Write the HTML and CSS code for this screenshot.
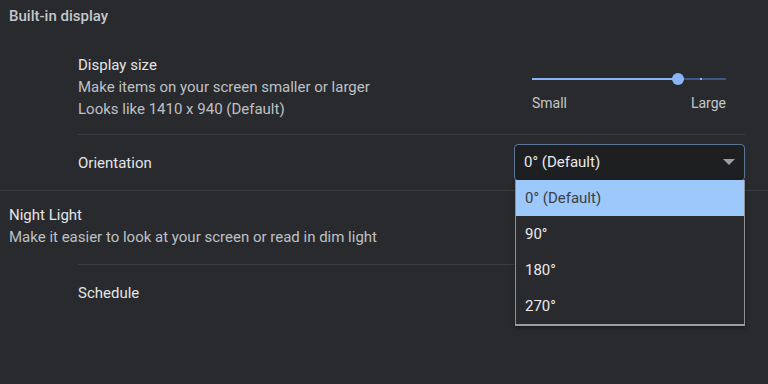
FILE: index.html
```html
<!DOCTYPE html>
<html>
<head>
<meta charset="utf-8">
<link rel="stylesheet" href="styles.css">
</head>
<body>
<div class="page">
  <section class="section">
    <div class="section-header">Built-in display</div>
    <div class="row row-size">
      <div class="texts">
        <div class="primary">Display size</div>
        <div class="secondary">Make items on your screen smaller or larger</div>
        <div class="secondary">Looks like 1410 x 940 (Default)</div>
      </div>
      <div class="slider">
        <div class="track">
          <div class="track-active"></div>
          <div class="track-inactive"></div>
          <div class="tick"></div>
          <div class="knob"></div>
        </div>
        <div class="slider-labels"><span>Small</span><span>Large</span></div>
      </div>
    </div>
    <div class="row row-orient">
      <div class="primary">Orientation</div>
      <div class="select">
        <span>0° (Default)</span>
        <svg class="arrow" width="12" height="6" viewBox="0 0 12 6"><path d="M0 0 L12 0 L6 6 Z" fill="#9aa0a6"/></svg>
      </div>
    </div>
  </section>
  <section class="section night">
    <div class="night-texts">
      <div class="primary">Night Light</div>
      <div class="secondary">Make it easier to look at your screen or read in dim light</div>
    </div>
    <div class="row row-schedule">
      <div class="primary">Schedule</div>
    </div>
  </section>
  <div class="menu">
    <div class="option selected">0° (Default)</div>
    <div class="option">90°</div>
    <div class="option">180°</div>
    <div class="option">270°</div>
  </div>
</div>
</body>
</html>
```

FILE: styles.css
```css
html, body {
  margin: 0;
  padding: 0;
  background: #292a2d;
}
body {
  font-family: Roboto, "Liberation Sans", sans-serif;
  font-size: 15px;
  color: #e8eaed;
  width: 768px;
  height: 384px;
  overflow: hidden;
}
.page {
  position: relative;
  height: 384px;
}
.section {
  border-bottom: 1px solid #3c3d41;
}
.night {
  border-bottom: none;
}
.section-header {
  height: 32px;
  display: flex;
  align-items: center;
  padding-left: 9px;
  font-weight: 500;
  color: #c4c7cb;
}
.primary {
  color: #e3e5e8;
  line-height: 22px;
}
.secondary {
  color: #bdc1c6;
  line-height: 22px;
}
.row {
  margin-left: 78px;
  margin-right: 23px;
  display: flex;
  justify-content: space-between;
}
.row-size {
  padding: 22px 0 14px 0;
  border-bottom: 1px solid #3c3d41;
  align-items: flex-start;
}
.slider {
  width: 194px;
  margin-right: 19px;
  margin-top: 13px;
}
.track {
  position: relative;
  height: 24px;
}
.track-active {
  position: absolute;
  left: 0;
  top: 11px;
  width: 146px;
  height: 2px;
  background: #8ab4f8;
}
.track-inactive {
  position: absolute;
  left: 146px;
  right: 0;
  top: 11px;
  height: 2px;
  background: #3b5985;
}
.tick {
  position: absolute;
  left: 168px;
  top: 11px;
  width: 2px;
  height: 2px;
  background: #8ab4f8;
}
.knob {
  position: absolute;
  left: 140px;
  top: 6px;
  width: 12px;
  height: 12px;
  border-radius: 50%;
  background: #8ab4f8;
}
.slider-labels {
  display: flex;
  justify-content: space-between;
  color: #c4c7cb;
  font-size: 14px;
  line-height: 20px;
  margin-top: 2px;
}
.row-orient {
  height: 55px;
  align-items: center;
  margin-right: 23px;
}
.select {
  box-sizing: border-box;
  width: 231px;
  height: 37px;
  margin-top: -1px;
  border: 1px solid #5c7698;
  border-radius: 4px;
  background: #1e1f21;
  display: flex;
  align-items: center;
  justify-content: space-between;
  padding: 0 9px 0 9px;
  color: #e8eaed;
  font-size: 15px;
}
.arrow {
  display: block;
}
.night-texts {
  padding: 13px 0 16px 9px;
}
.row-schedule {
  border-top: 1px solid #3c3d41;
  height: 55px;
  align-items: center;
}
.menu {
  position: absolute;
  left: 515px;
  top: 180px;
  width: 228px;
  background: #292a2d;
  border: 1px solid #8e9195;
  border-top: none;
  border-bottom: 2px solid #9a9da1;
  box-shadow: 0 2px 4px rgba(0,0,0,0.4);
}
.option {
  height: 36px;
  display: flex;
  align-items: center;
  padding-left: 9px;
  font-size: 15px;
  color: #e8eaed;
}
.option.selected {
  background: #9dc8fb;
  color: #3c4043;
}
```
